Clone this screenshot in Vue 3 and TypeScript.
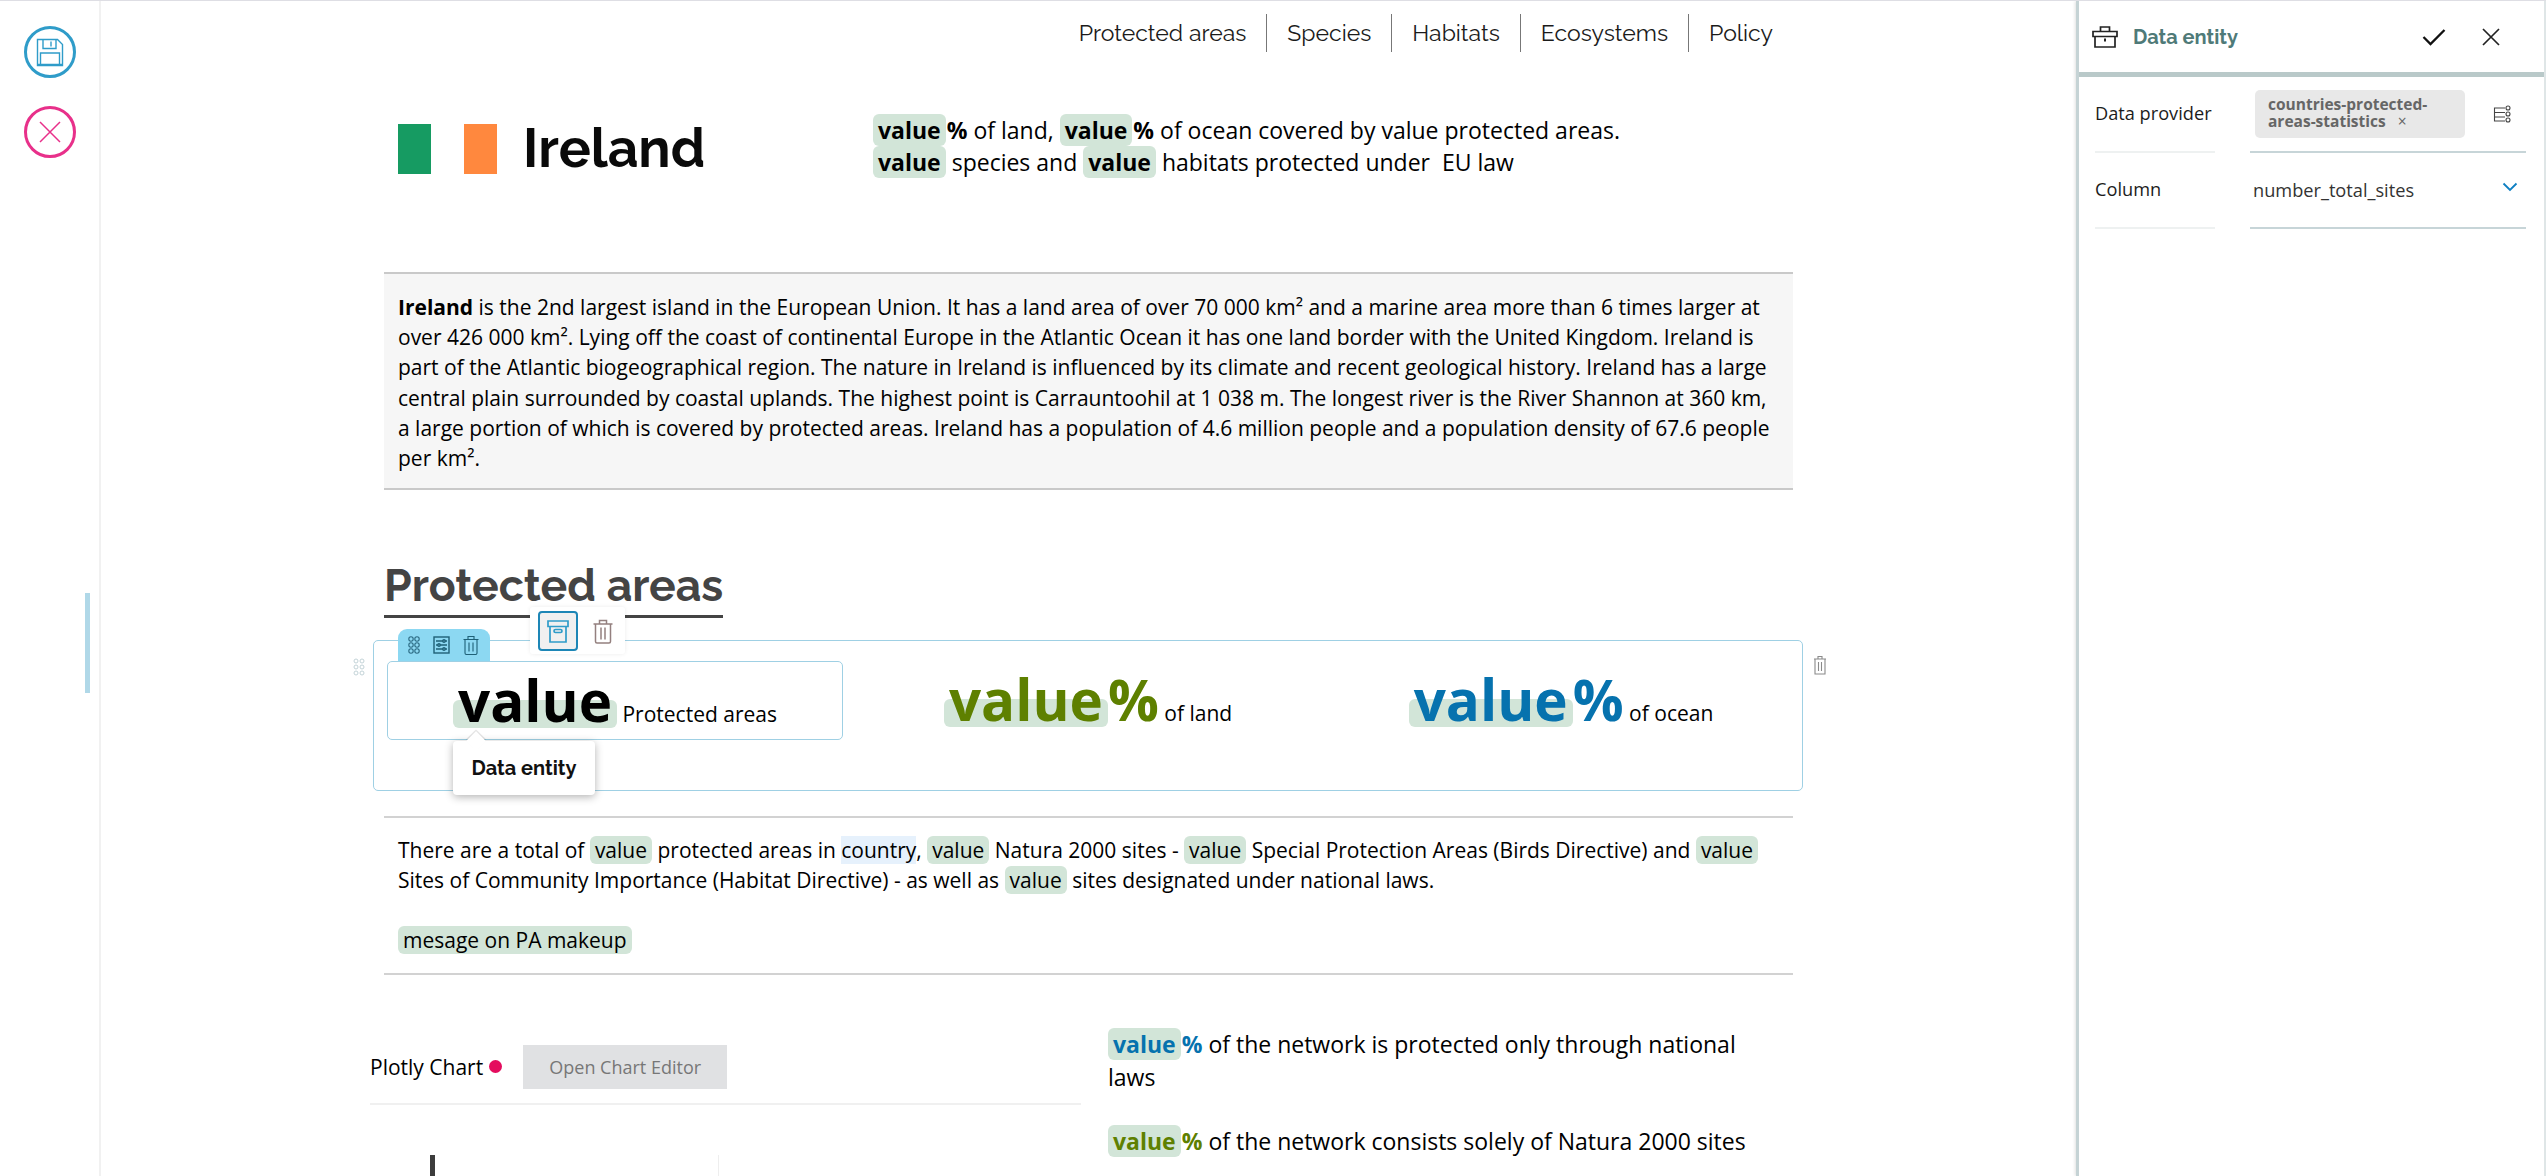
<script setup lang="ts">
const navItems: string[] = ['Protected areas', 'Species', 'Habitats', 'Ecosystems', 'Policy']
</script>

<template>
  <div class="app">
    <aside class="rail">
      <button class="round save" aria-label="Save">
        <svg width="28" height="29" viewBox="0 0 28 29" fill="none" stroke="#2f9cc9" stroke-width="1.4">
          <path d="M1.500 1.500h20l5 5v21h-25z" />
          <path d="M7 1.500v9h13v-9M15 3.500v5" />
          <path d="M4.500 27.500V15h19v12.500M1.500 26.500h25" />
        </svg>
      </button>
      <button class="round cancel" aria-label="Cancel">
        <svg width="26" height="26" viewBox="0 0 26 26" fill="none" stroke="#e8308a" stroke-width="1.5">
          <path d="M3 3l20 20M23 3L3 23" />
        </svg>
      </button>
      <span class="scroll-mark"></span>
    </aside>

    <main class="main">
      <div class="content">
        <nav class="nav">
          <a v-for="item in navItems" :key="item" class="nav-item">{{ item }}</a>
        </nav>

        <header class="hero">
          <div class="identity">
            <div class="flag"><i class="green"></i><i class="white"></i><i class="orange"></i></div>
            <h1>Ireland</h1>
          </div>
          <p class="summary">
            <span class="hl"><b>value</b></span><b class="pct">%</b> of land, <span class="hl"><b>value</b></span><b class="pct">%</b> of ocean covered by value protected areas.<br />
            <span class="hl"><b>value</b></span> species and <span class="hl"><b>value</b></span> habitats protected under&nbsp; EU law
          </p>
        </header>

        <section class="intro">
          <b>Ireland</b> is the 2nd largest island in the European Union. It has a land area of over 70 000 km² and a marine area more than 6 times larger at over 426 000 km². Lying off the coast of continental Europe in the Atlantic Ocean it has one land border with the United Kingdom. Ireland is part of the Atlantic biogeographical region. The nature in Ireland is influenced by its climate and recent geological history. Ireland has a large central plain surrounded by coastal uplands. The highest point is Carrauntoohil at 1 038 m. The longest river is the River Shannon at 360 km, a large portion of which is covered by protected areas. Ireland has a population of 4.6 million people and a population density of 67.6 people per km².
        </section>

        <h2 class="section-title"><span>Protected areas</span></h2>

        <section class="stats">
          <div class="side-handle">
            <svg width="12" height="18" viewBox="0 0 12 18" fill="none" stroke="#c3d3d8" stroke-width="1"><circle cx="3" cy="3" r="2"/><circle cx="9" cy="3" r="2"/><circle cx="3" cy="9" r="2"/><circle cx="9" cy="9" r="2"/><circle cx="3" cy="15" r="2"/><circle cx="9" cy="15" r="2"/></svg>
          </div>
          <div class="side-trash">
            <svg width="14" height="20" viewBox="0 0 14 20" fill="none" stroke="#8a8a8a" stroke-width="1.1"><path d="M1 4h12M5 4V1.500h4V4M2 4v15h10V4M5.500 7v9M8.500 7v9"/></svg>
          </div>
          <div class="pill">
            <svg class="p-dots" width="12" height="18" viewBox="0 0 12 18" fill="none" stroke="#2c6b84" stroke-width="1.100"><circle cx="3" cy="3" r="2.200"/><circle cx="9" cy="3" r="2.200"/><circle cx="3" cy="9" r="2.200"/><circle cx="9" cy="9" r="2.200"/><circle cx="3" cy="15" r="2.200"/><circle cx="9" cy="15" r="2.200"/></svg>
            <svg class="p-sliders" width="17" height="18" viewBox="0 0 17 18" fill="none" stroke="#1e6077" stroke-width="1.400"><rect x="1" y="1" width="15" height="16"/><path d="M3 5h11M3 9h11M3 13h11"/><circle cx="11" cy="5" r="1.200" fill="#8cd8f2"/><circle cx="6" cy="9" r="1.200" fill="#8cd8f2"/><circle cx="11" cy="13" r="1.200" fill="#8cd8f2"/></svg>
            <svg class="p-trash" width="16" height="20" viewBox="0 0 16 20" fill="none" stroke="#1e6077" stroke-width="1.100"><path d="M.5 4.500h15M5 4.500V1.500h6v3M2 4.500V18a1.500 1.500 0 001.500 1.500h9A1.500 1.500 0 0014 18V4.500M6 7.500v9M10 7.500v9"/></svg>
          </div>
          <div class="tools">
            <button class="tool active" aria-label="Archive">
              <svg width="22" height="23" viewBox="0 0 22 23" fill="none" stroke="#2f9cc9" stroke-width="1.700"><path d="M1 1h20v5.500H1zM3 6.500V22h16V6.500"/><rect x="7" y="9.500" width="8" height="3" rx="1.500"/></svg>
            </button>
            <button class="tool" aria-label="Delete">
              <svg width="20" height="25" viewBox="0 0 20 25" fill="none" stroke="#94807f" stroke-width="1.500"><path d="M.5 5h19M6.500 5V1.500h7V5M2.500 5v17.500a1.500 1.500 0 001.500 1.500h12a1.500 1.500 0 001.500-1.500V5M8 8.500v12M12 8.500v12"/></svg>
            </button>
          </div>

          <div class="stat selected">
            <span class="hl"><b class="big">value</b></span>
            Protected areas
            <div class="tooltip">Data entity</div>
          </div>
          <div class="stat">
            <span class="hl"><b class="big green-text">value</b></span><b class="big green-text">%</b>
            of land
          </div>
          <div class="stat">
            <span class="hl"><b class="big blue-text">value</b></span><b class="big blue-text">%</b>
            of ocean
          </div>
        </section>

        <section class="detail">
          <p>
            There are a total of <span class="hl">value</span> protected areas in <span class="ref">country</span>, <span class="hl">value</span> Natura 2000 sites - <span class="hl">value</span> Special Protection Areas (Birds Directive) and <span class="hl">value</span> Sites of Community Importance (Habitat Directive) - as well as <span class="hl">value</span> sites designated under national laws.
          </p>
          <p class="message"><span class="hl">mesage on PA makeup</span></p>
        </section>

        <section class="lower">
          <div class="chart-col">
            <div class="chart-head">
              <span>Plotly Chart</span><i class="dot"></i>
              <button class="editor">Open Chart Editor</button>
            </div>
            <div class="chart"><i class="axis"></i><i class="grid-line"></i></div>
          </div>
          <div class="facts">
            <p><span class="hl blue-text"><b>value</b></span><b class="blue-text pct">%</b> of the network is protected only through national laws</p>
            <p><span class="hl green-text"><b>value</b></span><b class="green-text pct">%</b> of the network consists solely of Natura 2000 sites</p>
          </div>
        </section>
      </div>
    </main>

    <aside class="panel">
      <header class="panel-head">
        <svg width="26" height="23" viewBox="0 0 26 23" fill="none" stroke="#222" stroke-width="1.700"><path d="M1 6.500h24v5H1zM3 11.500V22h20V11.500M8.500 6.500V2h9v4.500"/><path d="M13 13.500v3" stroke-width="2"/></svg>
        <span class="panel-title">Data entity</span>
        <svg class="check" width="24" height="18" viewBox="0 0 24 18" fill="none" stroke="#111" stroke-width="2.300"><path d="M1.500 9l7 7L22.500 2"/></svg>
        <svg class="close" width="18" height="18" viewBox="0 0 18 18" fill="none" stroke="#222" stroke-width="1.700"><path d="M1 1l16 16M17 1L1 17"/></svg>
      </header>
      <div class="field">
        <label>Data provider</label>
        <div class="control">
          <span class="chip">countries-protected-<br />areas-statistics <i>×</i></span>
          <svg width="18" height="18" viewBox="0 0 18 18" fill="none" stroke="#444" stroke-width="1.100"><path d="M12 3H1.500v13H12M1.500 7.500H12M1.500 12H12"/><circle cx="15" cy="3" r="2"/><circle cx="15" cy="9" r="2"/><circle cx="15" cy="15" r="2"/></svg>
        </div>
      </div>
      <div class="field second">
        <label>Column</label>
        <div class="control plain">
          <span>number_total_sites</span>
          <svg class="chev" width="16" height="10" viewBox="0 0 16 10" fill="none" stroke="#0e7fc2" stroke-width="1.800"><path d="M1.500 1.500L8 8l6.500-6.500"/></svg>
        </div>
      </div>
    </aside>
  </div>
</template>

<style>
html, body { margin: 0; background: #fff; overflow: hidden; }
</style>

<style scoped>
* { box-sizing: border-box; }
.app {
  display: flex;
  width: 2546px;
  height: 1176px;
  overflow: hidden;
  border-top: 1px solid #dedee4;
  font-family: "Open Sans", "Noto Sans", sans-serif;
  font-size: 21px;
  color: #000;
}
b { font-weight: 700; }
p { margin: 0; }
button { font-family: inherit; }

.rail {
  position: relative;
  flex: 0 0 101px;
  display: flex;
  flex-direction: column;
  align-items: center;
  gap: 28px;
  padding-top: 25px;
  border-right: 2px solid #f1f1f1;
}
.round {
  width: 52px;
  height: 52px;
  padding: 0;
  display: flex;
  align-items: center;
  justify-content: center;
  border-radius: 50%;
  background: #fff;
}
.save { border: 3px solid #2f9cc9; }
.cancel { border: 3px solid #e8308a; }
.scroll-mark {
  position: absolute;
  left: 85px;
  top: 592px;
  width: 5px;
  height: 100px;
  background: #b0d8e8;
}

.main { flex: 1; min-width: 0; }
.content { width: 1409px; margin-left: 283px; }

.nav {
  display: flex;
  justify-content: flex-end;
  padding: 13px 20px 0 0;
}
.nav-item {
  height: 38px;
  line-height: 38px;
  padding: 0 20px;
  font-family: "Raleway", "Lato", sans-serif;
  font-size: 23px;
  color: #1b1b1b;
  border-right: 1px solid #777;
}
.nav-item:last-child { border-right: 0; padding-right: 0; }

.hero {
  display: flex;
  align-items: center;
  height: 96px;
  margin-top: 49px;
  padding-left: 14px;
}
.identity { display: flex; align-items: center; width: 475px; }
.flag { display: flex; width: 99px; height: 50px; }
.flag i { flex: 1; }
.green { background: #169b62; }
.white { background: #fff; }
.orange { background: #ff883e; }
h1 {
  margin: 0 0 0 26px;
  font-family: "Raleway", "Lato", sans-serif;
  font-size: 53.500px;
  line-height: 60px;
  font-weight: 700;
  color: #0a0a0a;
}
.summary { font-size: 23px; line-height: 32px; margin-top: -6px; }
.hl { background: #d2e5d8; border-radius: 6px; padding: 0 5px; }
.pct { margin-left: 1px; }

.intro {
  margin-top: 75px;
  height: 218px;
  padding: 18px 14px 0;
  background: #f6f6f6;
  border-top: 2px solid #c9c9c9;
  border-bottom: 2px solid #c9c9c9;
  font-size: 21px;
  line-height: 30.200px;
}

.section-title {
  margin: 67px 0 0;
  font-family: "Raleway", "Lato", sans-serif;
  font-size: 44.500px;
  line-height: 57px;
  font-weight: 700;
  color: #444;
}
.section-title span {
  display: inline-block;
  border-bottom: 3px solid #444;
  padding-bottom: 1px;
}

.stats {
  position: relative;
  display: grid;
  grid-template-columns: repeat(3, 456px);
  column-gap: 17px;
  align-content: start;
  width: 1430px;
  height: 151px;
  margin: 22px 0 0 -11px;
  padding: 20px 0 0 13px;
  border: 1px solid #9fd0e4;
  border-radius: 5px;
}
.side-handle { position: absolute; left: -21px; top: 13px; }
.side-trash { position: absolute; right: -25px; top: 12px; }
.pill {
  position: absolute;
  left: 24px;
  top: -12px;
  width: 92px;
  height: 33px;
  background: #8cd8f2;
  border-radius: 9px 9px 0 0;
}
.pill svg { position: absolute; }
.p-dots { left: 10px; top: 7px; }
.p-sliders { left: 35px; top: 7px; }
.p-trash { left: 65px; top: 6px; }
.tools {
  position: absolute;
  left: 156px;
  top: -34px;
  width: 95px;
  height: 47px;
  padding: 4px 0 4px 8px;
  display: flex;
  align-items: flex-start;
  gap: 5px;
  background: #fff;
  border-radius: 3px;
  box-shadow: 0 0 4px rgba(0, 0, 0, .08);
  z-index: 2;
}
.tool {
  flex: none;
  width: 40px;
  height: 40px;
  padding: 0;
  display: flex;
  align-items: center;
  justify-content: center;
  border: 0;
  background: transparent;
  border-radius: 4px;
}
.tool.active { background: #f0f0f0; border: 2px solid #1d86b6; }

.stat {
  position: relative;
  height: 79px;
  padding-top: 11px;
  text-align: center;
  font-size: 21px;
  line-height: 73px;
  white-space: nowrap;
}
.stat.selected { border: 1px solid #9fd0e4; border-radius: 5px; }
.big { font-size: 56.500px; line-height: 1; }
.green-text { color: #5e8000; }
.blue-text { color: #0672ae; }
.tooltip {
  position: absolute;
  left: 65px;
  top: 79px;
  width: 142px;
  height: 54px;
  background: #fff;
  border-radius: 4px;
  box-shadow: 0 2px 8px rgba(0, 0, 0, .3);
  font-family: "Raleway", "Lato", sans-serif;
  font-size: 20px;
  font-weight: 700;
  line-height: 54px;
  color: #111;
  z-index: 3;
}
.tooltip::before {
  content: "";
  position: absolute;
  left: 16px;
  top: -7px;
  width: 14px;
  height: 14px;
  background: #fff;
  transform: rotate(45deg);
  box-shadow: -1px -1px 1px rgba(0, 0, 0, .15);
}

.detail {
  margin-top: 25px;
  height: 159px;
  padding: 17px 14px 0;
  border-top: 2px solid #d2d2d2;
  border-bottom: 2px solid #d2d2d2;
  font-size: 21px;
  line-height: 30px;
}
.ref { background: #e6f1fc; }
.message { margin-top: 30px; }

.lower {
  display: grid;
  grid-template-columns: 711px 1fr;
  column-gap: 27px;
  margin: 51px 0 0 -14px;
}
.chart-head {
  display: flex;
  align-items: center;
  height: 79px;
  border-bottom: 2px solid #f0f0f0;
  padding-top: 19px;
  padding-bottom: 15px;
  font-size: 21px;
}
.dot {
  width: 13px;
  height: 13px;
  margin-left: 6px;
  border-radius: 50%;
  background: #e40c5e;
}
.editor {
  width: 204px;
  height: 44px;
  margin-left: 21px;
  border: 0;
  background: #e0e1e3;
  color: #777;
  font-size: 18px;
}
.chart { position: relative; height: 60px; }
.axis { position: absolute; left: 60px; top: 50px; width: 5px; height: 40px; background: #3c3c3c; }
.grid-line { position: absolute; left: 348px; top: 50px; width: 1px; height: 40px; background: #eee; }
.facts { padding: 2px 30px 0 0; font-size: 23px; line-height: 33px; }
.facts p { margin-bottom: 31px; }

.panel {
  flex: 0 0 470px;
  border-left: 3px solid #c5d3d5;
  border-right: 2px solid #dfe6e7;
  box-shadow: -1px 0 3px rgba(0, 0, 0, .12);
  font-size: 18.200px;
}
.panel-head {
  display: flex;
  align-items: center;
  height: 76px;
  padding: 0 44px 0 13px;
  border-bottom: 5px solid #b9c9c9;
}
.panel-title {
  margin-left: 15px;
  font-family: "Raleway", "Lato", sans-serif;
  font-size: 20px;
  font-weight: 700;
  color: #4f7a78;
}
.check { margin-left: auto; }
.close { margin-left: 36px; }
.field {
  display: grid;
  grid-template-columns: 120px 276px;
  column-gap: 35px;
  padding-left: 16px;
  height: 76px;
}
.field label {
  display: flex;
  align-items: center;
  padding-bottom: 2px;
  border-bottom: 2px solid #eef1f1;
  color: #1c1c1c;
}
.control {
  display: flex;
  align-items: center;
  justify-content: space-between;
  padding-right: 15px;
  padding-left: 5px;
  border-bottom: 2px solid #c7d5d8;
}
.plain { padding-left: 3px; padding-right: 8px; color: #333; }
.chev { margin-top: -6px; }
.chip {
  width: 210px;
  height: 48px;
  padding: 6px 13px;
  background: #e8e8e8;
  border-radius: 5px;
  font-size: 15.500px;
  font-weight: 700;
  line-height: 17px;
  color: #666;
}
.chip i { font-style: normal; font-weight: 400; margin-left: 8px; }
</style>
